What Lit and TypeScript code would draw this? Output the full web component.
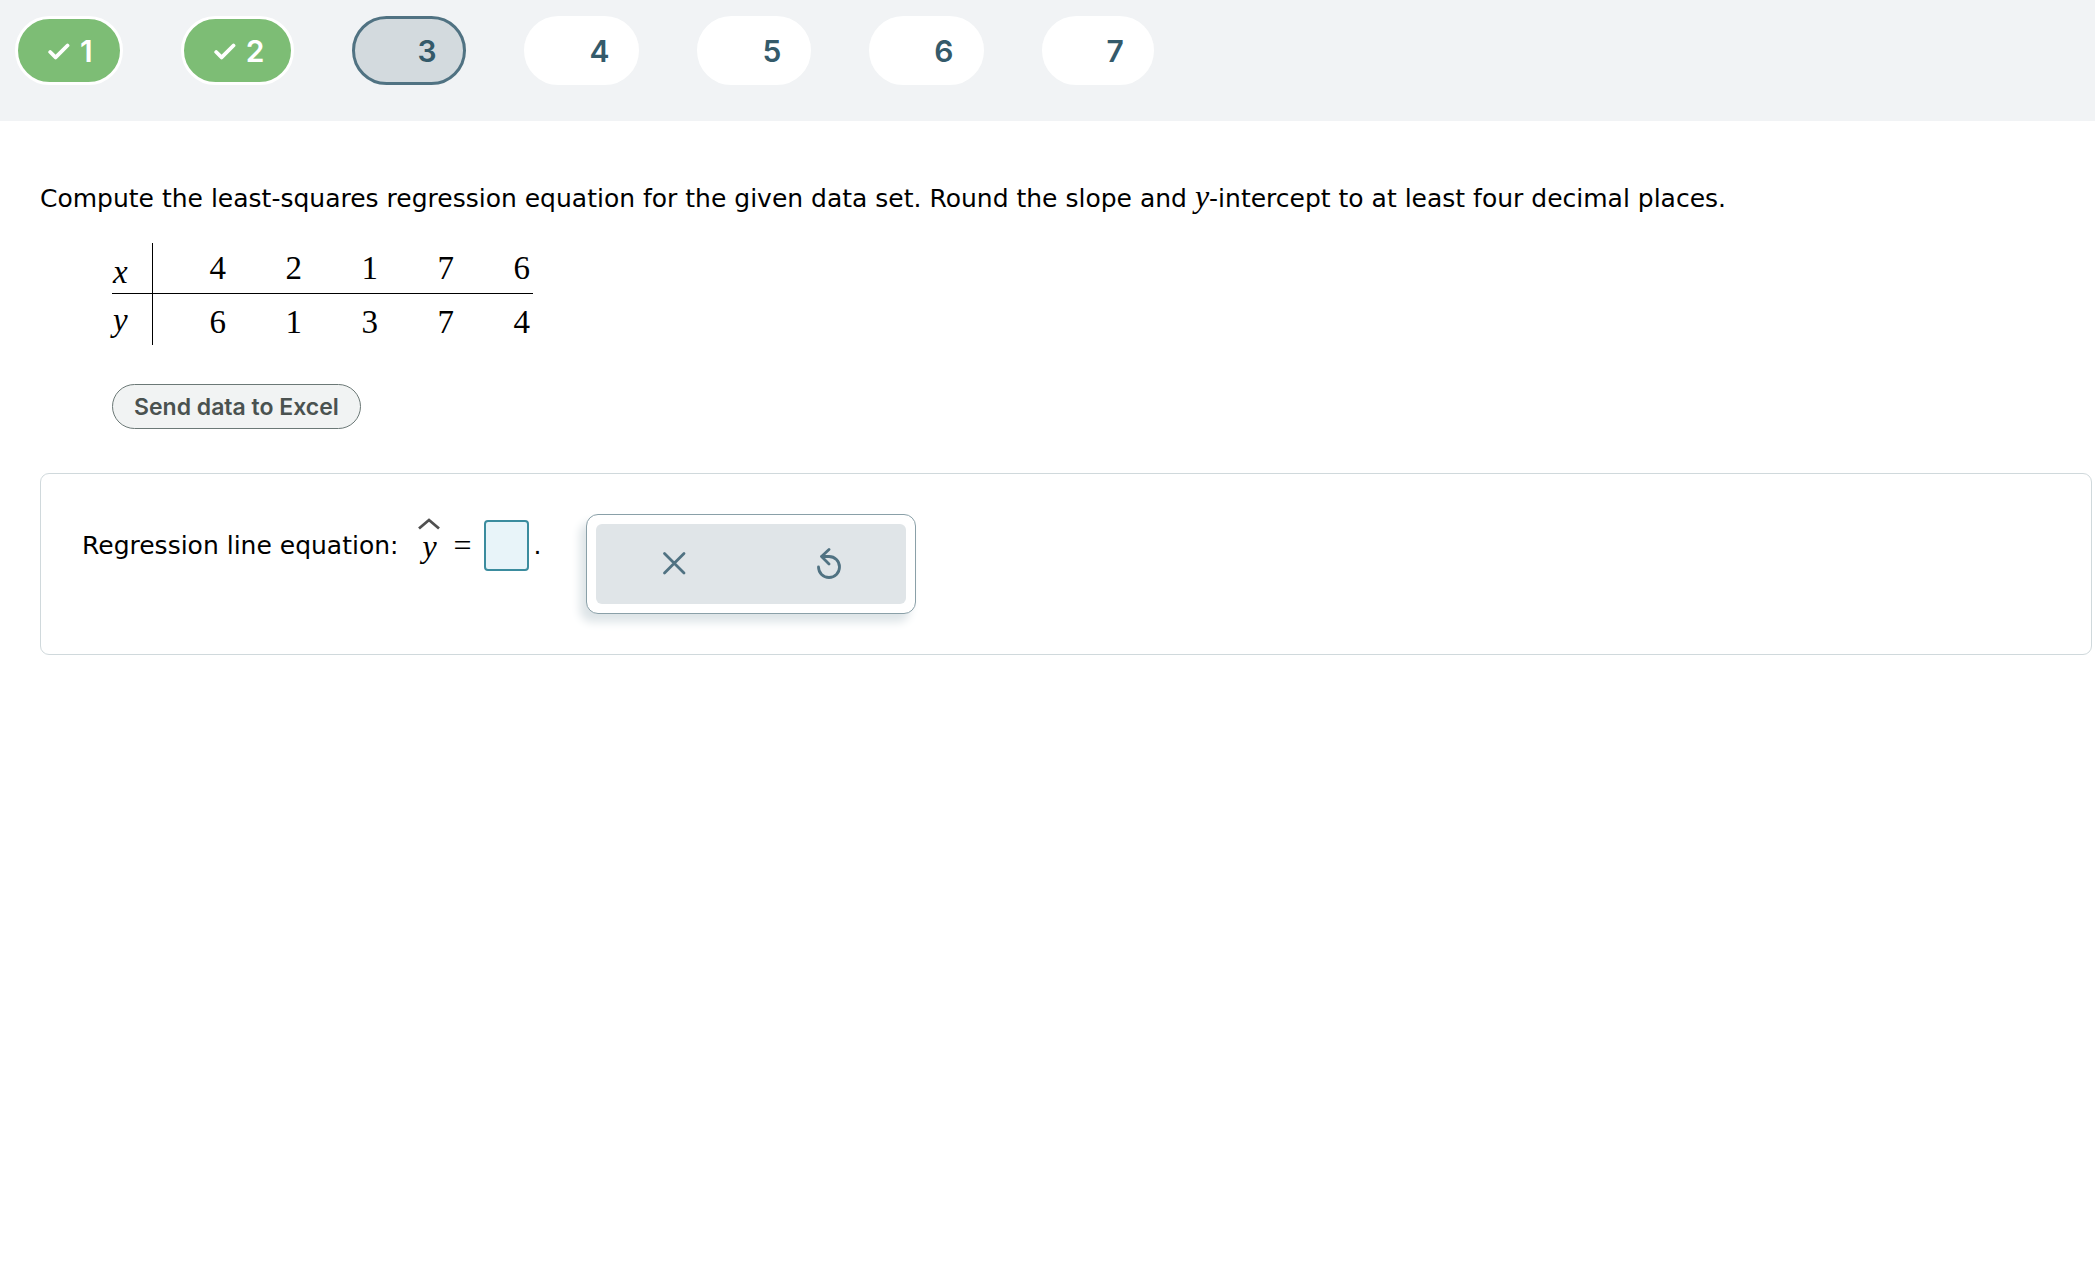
import { LitElement, html, svg, css, nothing } from "lit";
import { customElement, state } from "lit/decorators.js";
import { classMap } from "lit/directives/class-map.js";

interface Step {
  n: number;
  done: boolean;
}

const STEPS: Step[] = [1, 2, 3, 4, 5, 6, 7].map((n) => ({ n, done: n < 3 }));

@customElement("step-nav")
export class StepNav extends LitElement {
  @state() private current = 3;

  static styles = css`
    :host {
      display: block;
      background: #f1f3f5;
    }
    .steps {
      display: flex;
      flex-wrap: wrap;
      gap: 58px;
      margin: 0;
      padding: 16px 15px 36px;
      list-style: none;
    }
    .pill {
      display: flex;
      align-items: center;
      gap: 10px;
      box-sizing: border-box;
      height: 69px;
      padding: 0 27px 0 30px;
      border: 3px solid #ffffff;
      border-radius: 35px;
      background: #ffffff;
      color: #345a6a;
      font: 600 30px/36px Inter, "Liberation Sans", sans-serif;
      cursor: pointer;
    }
    .done {
      background: #7dbd75;
      color: #ffffff;
    }
    .current {
      background: #d3dade;
      border-color: #507282;
      color: #345a6a;
    }
    .mark {
      display: block;
      width: 22px;
      height: 22px;
    }
  `;

  render() {
    return html`<nav aria-label="Questions">
      <ol class="steps">
        ${STEPS.map(
          (s) => html`<li>
            <button
              type="button"
              class=${classMap({ pill: true, done: s.done, current: s.n === this.current })}
              aria-current=${s.n === this.current ? "step" : nothing}
              @click=${() => (this.current = s.n)}
            >
              <svg class="mark" viewBox="0 0 22 22" aria-hidden="true">
                ${s.done
                  ? svg`<path d="M2.2 12 L7.6 17.4 L19.5 5.5" fill="none" stroke="#ffffff" stroke-width="3.8" stroke-linecap="round" stroke-linejoin="round" />`
                  : nothing}
              </svg>
              <span>${s.n}</span>
            </button>
          </li>`
        )}
      </ol>
    </nav>`;
  }
}

@customElement("data-table")
export class DataTable extends LitElement {
  private rows: [string, number[]][] = [
    ["x", [4, 2, 1, 7, 6]],
    ["y", [6, 1, 3, 7, 4]],
  ];

  static styles = css`
    :host {
      display: block;
    }
    .data {
      border-collapse: separate;
      border-spacing: 0;
      font: 33px/36px "Liberation Serif", serif;
      color: #000000;
    }
    .name {
      box-sizing: border-box;
      width: 41px;
      padding: 0 0 0 1px;
      border-right: 1px solid #000000;
      font-style: italic;
      font-weight: 400;
      text-align: left;
    }
    .value {
      box-sizing: border-box;
      width: 76px;
      height: 51px;
      padding: 0 3px 0 0;
      text-align: right;
    }
    .row:first-child .name,
    .row:first-child .value {
      border-bottom: 1px solid #000000;
    }
    .row:first-child .name {
      padding-top: 8px;
    }
    .row:last-child .value {
      padding-top: 4px;
    }
  `;

  render() {
    return html`<table class="data" aria-label="Data set">
      <tbody>
        ${this.rows.map(
          ([name, values]) => html`<tr class="row">
            <th class="name" scope="row">${name}</th>
            ${values.map((v) => html`<td class="value">${v}</td>`)}
          </tr>`
        )}
      </tbody>
    </table>`;
  }
}

@customElement("answer-card")
export class AnswerCard extends LitElement {
  @state() private answer = "";

  static styles = css`
    :host {
      display: block;
    }
    .card {
      display: flex;
      flex-wrap: wrap;
      align-items: flex-start;
      gap: 45px;
      padding: 40px 40px 40px 41px;
      border: 1px solid #d0d9dc;
      border-radius: 9px;
    }
    .equation {
      display: flex;
      align-items: center;
      padding-top: 4px;
      font: 25px/34px Verdana, "DejaVu Sans", sans-serif;
      color: #000000;
    }
    .label,
    .stop {
      padding-top: 2px;
    }
    .hat {
      display: flex;
      flex-direction: column;
      align-items: center;
      margin: 0 12px 0 19px;
      font: italic 32px/32px "Liberation Serif", serif;
    }
    .caret {
      display: block;
      width: 24px;
      height: 12px;
    }
    .hat-y {
      padding-bottom: 10px;
    }
    .equals {
      margin-right: 12px;
      font: 32px/32px "Liberation Serif", serif;
    }
    .box {
      box-sizing: border-box;
      width: 45px;
      height: 51px;
      margin-right: 5px;
      padding: 0 4px;
      border: 2px solid #3b8c9e;
      border-radius: 4px;
      background: #e8f4f9;
      font: 32px/32px "Liberation Serif", serif;
      text-align: center;
      outline: none;
    }
    .tools {
      display: flex;
      box-sizing: border-box;
      width: 330px;
      height: 100px;
      padding: 9px;
      border: 1px solid #8aa0a8;
      border-radius: 12px;
      background: #ffffff;
      box-shadow: -6px 8px 10px #dde4e7;
    }
    .tool {
      display: flex;
      flex: 1;
      align-items: center;
      justify-content: center;
      padding: 0;
      border: 0;
      background: #e0e5e8;
      cursor: pointer;
    }
    .tool:first-child {
      border-radius: 6px 0 0 6px;
    }
    .tool:last-child {
      border-radius: 0 6px 6px 0;
    }
    .glyph {
      display: block;
      width: 32px;
      height: 32px;
      fill: none;
      stroke: #507282;
      stroke-width: 2.8;
      stroke-linecap: round;
      stroke-linejoin: round;
    }
  `;

  private edit(e: Event) {
    this.answer = (e.target as HTMLInputElement).value;
  }

  private clear() {
    this.answer = "";
  }

  render() {
    return html`<section class="card">
      <div class="equation">
        <label class="label" for="answer">Regression line equation:</label>
        <span class="hat">
          <svg class="caret" viewBox="0 0 24 12" aria-hidden="true">
            <path d="M2 10.5 L12 2 L22 10.5" fill="none" stroke="#505050" stroke-width="2.8" />
          </svg>
          <span class="hat-y">y</span>
        </span>
        <span class="equals">=</span>
        <input id="answer" class="box" type="text" .value=${this.answer} @input=${this.edit} />
        <span class="stop">.</span>
      </div>
      <div class="tools" role="toolbar" aria-label="Answer tools">
        <button class="tool" type="button" aria-label="Clear" @click=${this.clear}>
          <svg class="glyph" viewBox="0 0 32 32" aria-hidden="true">
            <path d="M6.5 5.5 L26 25 M26 5.5 L6.5 25" />
          </svg>
        </button>
        <button class="tool" type="button" aria-label="Undo" @click=${this.clear}>
          <svg class="glyph" viewBox="0 0 32 32" aria-hidden="true">
            <path d="M5.5 19 A10.5 10.5 0 1 0 16 8.5 L8.5 8.5 M16 1.5 L8.5 8.5 L16 16" />
          </svg>
        </button>
      </div>
    </section>`;
  }
}

@customElement("app-root")
export class AppRoot extends LitElement {
  static styles = css`
    :host {
      display: block;
      min-height: 100vh;
      background: #ffffff;
    }
    .content {
      padding: 59px 3px 40px 40px;
    }
    .prompt {
      margin: 0;
      font: 25px/34px Verdana, "DejaVu Sans", sans-serif;
      color: #000000;
    }
    .var {
      font: italic 32px/32px "Liberation Serif", serif;
    }
    .dataset {
      display: flex;
      flex-direction: column;
      align-items: flex-start;
      gap: 39px;
      padding: 27px 0 44px 72px;
    }
    .send {
      box-sizing: border-box;
      height: 45px;
      padding: 0 21px;
      border: 1px solid #6b7876;
      border-radius: 23px;
      background: #f1f3f3;
      color: #4a5250;
      font: 600 23px/30px Inter, "Liberation Sans", sans-serif;
      cursor: pointer;
    }
  `;

  render() {
    return html`
      <step-nav></step-nav>
      <main class="content">
        <p class="prompt">
          Compute the least-squares regression equation for the given data set. Round the slope and
          <span class="var">y</span>-intercept to at least four decimal places.
        </p>
        <div class="dataset">
          <data-table></data-table>
          <button class="send" type="button">Send data to Excel</button>
        </div>
        <answer-card></answer-card>
      </main>
    `;
  }
}
